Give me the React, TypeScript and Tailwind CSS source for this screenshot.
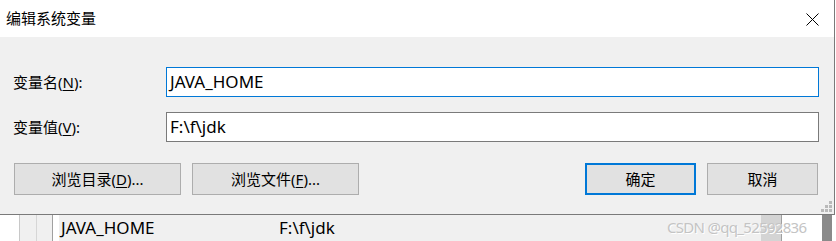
import React from 'react'

const font = { fontFamily: '"Noto Sans", "Noto Sans CJK SC", sans-serif' }

function U({ children }: { children: React.ReactNode }) {
  return <span className="underline underline-offset-2 decoration-1">{children}</span>
}

function Btn({ children, w, primary = false }: { children: React.ReactNode; w: string; primary?: boolean }) {
  return (
    <button
      className={`${w} h-[32px] flex items-center justify-center bg-[#e1e1e1] text-[15px] leading-none text-black ${
        primary ? 'border-2 border-[#0078d7]' : 'border border-[#adadad]'
      }`}
    >
      {children}
    </button>
  )
}

export default function App() {
  return (
    <div className="w-[836px] h-[241px] bg-white overflow-hidden flex flex-col" style={font}>
      {/* dialog */}
      <div className="w-[835px] h-[215px] flex flex-col border-r border-b border-[#7a7a7a] shrink-0">
        {/* title bar */}
        <div className="h-[37px] bg-white flex items-center justify-between pl-[6px] pr-[15px]">
          <span className="text-[15px] leading-none text-black">编辑系统变量</span>
          <svg width="13" height="13" viewBox="0 0 13 13" className="mt-[1px]">
            <path d="M0.5 0.5 L12.5 12.5 M12.5 0.5 L0.5 12.5" stroke="#000" strokeWidth="1" fill="none" />
          </svg>
        </div>

        {/* body */}
        <div className="flex-1 bg-[#f0f0f0] relative pt-[30px] pl-[13px] pr-[15px]">
          <div className="flex items-center h-[30px]">
            <span className="w-[153px] text-[15px] leading-none text-black">
              变量名(<U>N</U>):
            </span>
            <div className="w-[653px] h-[30px] bg-white border border-[#0078d7] flex items-center pl-[3px] text-[17px] text-black">
              JAVA_HOME
            </div>
          </div>
          <div className="flex items-center h-[30px] mt-[15px]">
            <span className="w-[153px] text-[15px] leading-none text-black">
              变量值(<U>V</U>):
            </span>
            <div className="w-[653px] h-[30px] bg-white border border-[#7a7a7a] flex items-center pl-[3px] text-[17px] text-black">
              F:\f\jdk
            </div>
          </div>
          <div className="flex items-center mt-[21px] pl-[1px]">
            <Btn w="w-[167px]">
              浏览目录(<U>D</U>)...
            </Btn>
            <div className="ml-[11px]">
              <Btn w="w-[167px]">
                浏览文件(<U>F</U>)...
              </Btn>
            </div>
            <div className="ml-auto flex gap-[11px] mr-[1px]">
              <Btn w="w-[111px]" primary>
                确定
              </Btn>
              <Btn w="w-[111px]">取消</Btn>
            </div>
          </div>
          {/* resize grip */}
          <svg width="11" height="11" viewBox="0 0 11 11" className="absolute right-[2px] bottom-[2px]">
            <rect x="8" y="0" width="3" height="3" fill="#b9b9b9" />
            <rect x="4" y="4" width="3" height="3" fill="#b9b9b9" />
            <rect x="8" y="4" width="3" height="3" fill="#b9b9b9" />
            <rect x="0" y="8" width="3" height="3" fill="#b9b9b9" />
            <rect x="4" y="8" width="3" height="3" fill="#b9b9b9" />
            <rect x="8" y="8" width="3" height="3" fill="#b9b9b9" />
          </svg>
        </div>
      </div>

      {/* list row behind the dialog */}
      <div className="flex-1 flex relative">
        <div className="w-[20px] bg-white border-r border-[#c8c8c8]" />
        <div className="w-[17px] bg-[#f0f0f0] border-r border-[#d6d6d6]" />
        <div className="w-[16px] bg-[#f0f0f0] border-r border-[#a0a0a0]" />
        <div className="w-[6px] bg-white" />
        <div className="flex-1 bg-[#f0f0f0] flex items-center text-[17px] text-black">
          <span className="w-[220px] pl-[2px]">JAVA_HOME</span>
          <span>F:\f\jdk</span>
        </div>
        <div className="w-[21px] bg-[#d4d4d4] border-r border-[#a0a0a0]" />
        <div className="w-[40px] bg-white" />
        <div className="w-[10px] bg-[#8a8a8a]" />
        <div className="w-[4px] bg-white" />
        <span className="absolute z-10 left-[667px] top-[1px] text-[15px] text-[#c4c4c4] tracking-[-0.7px] [text-shadow:1px_1px_0_#ffffff]">
          CSDN @qq_52592836
        </span>
      </div>
    </div>
  )
}
